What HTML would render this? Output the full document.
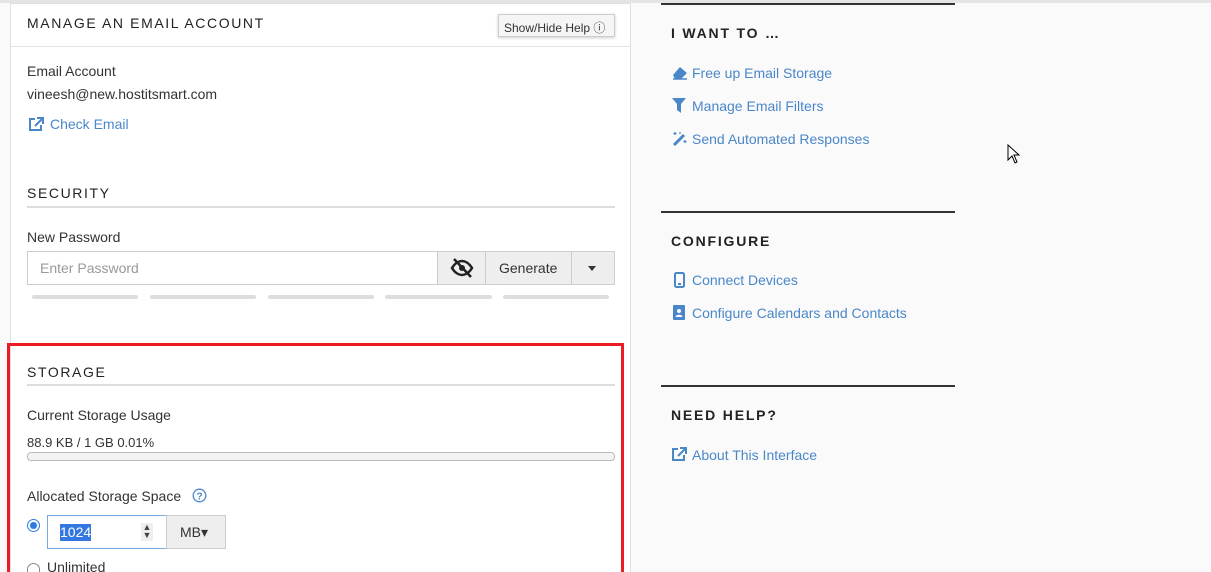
<!DOCTYPE html>
<html><head><style>
*{margin:0;padding:0;box-sizing:border-box}
html,body{width:1211px;height:572px;overflow:hidden}
body{background:#fafafa;font-family:"Liberation Sans",sans-serif;color:#333;position:relative;font-size:14px}
.a{position:absolute;white-space:nowrap}
.h{letter-spacing:1.4px;font-size:14px;color:#222;font-weight:bold}
.lk{color:#4a87c9;font-size:14px}
.lbl{font-size:14px;color:#333}
</style></head><body>
<div class="a" style="left:0;top:0;width:1211px;height:3px;background:#e4e4e4"></div>
<div class="a" style="left:10px;top:3px;width:621px;height:569px;background:#fff;border:1px solid #e0e0e0;border-bottom:none"></div>
<div class="a" style="left:11px;top:46px;width:619px;height:1px;background:#e3e3e3"></div>
<div class="a h" style="left:27px;top:15px;font-weight:normal;letter-spacing:1.6px">MANAGE AN EMAIL ACCOUNT</div>
<div class="a" style="left:498px;top:14px;width:117px;height:23px;border:1px solid #ccc;background:#f5f5f5;box-shadow:0 1px 3px rgba(0,0,0,.2);font-size:12px;color:#333;padding:4px 0 0 5px">Show/Hide Help ⓘ</div>
<div class="a lbl" style="left:27px;top:63px">Email Account</div>
<div class="a lbl" style="left:27px;top:86px">vineesh@new.hostitsmart.com</div>
<svg class="a" style="left:29px;top:117px" width="15" height="14" viewBox="0 0 15 14"><path d="M6 2H1v11h11V8" fill="none" stroke="#4a87c9" stroke-width="2"/><path d="M8 1h6v6M14 1L6 9" fill="none" stroke="#4a87c9" stroke-width="2"/></svg>
<div class="a lk" style="left:50px;top:116px">Check Email</div>
<div class="a h" style="left:27px;top:185px;font-weight:normal;letter-spacing:1.6px">SECURITY</div>
<div class="a" style="left:27px;top:206px;width:588px;height:2px;background:#ddd"></div>
<div class="a lbl" style="left:27px;top:229px">New Password</div>
<div class="a" style="left:27px;top:251px;width:588px;height:34px;border:1px solid #ccc;background:#fff"></div>
<div class="a" style="left:40px;top:260px;color:#999;font-size:14px">Enter Password</div>
<div class="a" style="left:437px;top:252px;width:177px;height:32px;background:#eee;border-left:1px solid #ccc"></div>
<div class="a" style="left:485px;top:252px;width:1px;height:32px;background:#ccc"></div>
<div class="a" style="left:571px;top:252px;width:1px;height:32px;background:#ccc"></div>
<svg class="a" style="left:450px;top:258px" width="24" height="20" viewBox="0 0 24 20"><path d="M2 10c3-5 7-7 10-7s7 2 10 7c-3 5-7 7-10 7S5 15 2 10z" fill="none" stroke="#222" stroke-width="2.5"/><circle cx="12" cy="10" r="3" fill="#222"/><path d="M4 1l17 18" stroke="#222" stroke-width="2.5"/></svg>
<div class="a" style="left:499px;top:260px;font-size:14px;color:#333">Generate</div>
<div class="a" style="left:588px;top:266px;border:4px solid transparent;border-top:5px solid #333;border-bottom:0"></div>
<div class="a" style="left:32px;top:295px;width:106px;height:4px;border-radius:2px;background:#ddd"></div>
<div class="a" style="left:150px;top:295px;width:106px;height:4px;border-radius:2px;background:#ddd"></div>
<div class="a" style="left:268px;top:295px;width:106px;height:4px;border-radius:2px;background:#ddd"></div>
<div class="a" style="left:385px;top:295px;width:107px;height:4px;border-radius:2px;background:#ddd"></div>
<div class="a" style="left:503px;top:295px;width:106px;height:4px;border-radius:2px;background:#ddd"></div>
<div class="a" style="left:7px;top:343px;width:617px;height:229px;border:3px solid #ec1c24;border-bottom:none"></div>
<div class="a h" style="left:27px;top:364px;font-weight:normal;letter-spacing:1.6px">STORAGE</div>
<div class="a" style="left:27px;top:384px;width:588px;height:2px;background:#ddd"></div>
<div class="a lbl" style="left:27px;top:407px">Current Storage Usage</div>
<div class="a" style="left:27px;top:435px;font-size:13px">88.9 KB / 1 GB 0.01%</div>
<div class="a" style="left:27px;top:452px;width:588px;height:9px;border:1px solid #bbb;border-radius:4px;background:#f3f3f3"></div>
<div class="a lbl" style="left:27px;top:488px">Allocated Storage Space</div>
<svg class="a" style="left:192px;top:488px" width="15" height="15" viewBox="0 0 15 15"><circle cx="7.5" cy="7.5" r="6.3" fill="none" stroke="#4a87c9" stroke-width="1.3"/><text x="7.5" y="11.3" font-size="10" text-anchor="middle" fill="#4a87c9" font-family="Liberation Sans" font-weight="bold">?</text></svg>
<div class="a" style="left:27px;top:519px;width:13px;height:13px;border-radius:50%;border:1px solid #2a7ae2;background:radial-gradient(circle,#2a7ae2 3px,#fff 4px)"></div>
<div class="a" style="left:47px;top:515px;width:120px;height:34px;border:1px solid #7aa9e6;background:#fff"></div>
<div class="a" style="left:60px;top:524px;background:#3377e0;color:#fff;font-size:14px;line-height:17px">1024</div>
<div class="a" style="left:141px;top:523px;width:12px;height:18px;background:#eee;font-size:9px;line-height:8px;text-align:center;color:#444">▲<br>▼</div>
<div class="a" style="left:166px;top:515px;width:60px;height:34px;border:1px solid #ccc;background:#eee;font-size:14px;padding:8px 0 0 13px">MB▾</div>
<div class="a" style="left:27px;top:563px;width:13px;height:9px;border-radius:7px 7px 0 0;border:1px solid #888;border-bottom:none;background:#fff"></div>
<div class="a lbl" style="left:47px;top:559px;height:13px;overflow:hidden">Unlimited</div>

<div class="a" style="left:661px;top:3px;width:294px;height:2px;background:#333"></div>
<div class="a h" style="left:671px;top:25px;letter-spacing:1.8px">I WANT TO …</div>
<svg class="a" style="left:672px;top:66px" width="16" height="14" viewBox="0 0 16 14"><path d="M1 9l7-8 7 6-6 6H3z" fill="#4a87c9"/><path d="M1 13h14" stroke="#4a87c9" stroke-width="1.5"/></svg>
<div class="a lk" style="left:692px;top:65px">Free up Email Storage</div>
<svg class="a" style="left:672px;top:98px" width="14" height="15" viewBox="0 0 14 15"><path d="M0 0h14L9 6v9L5 12V6z" fill="#4a87c9"/></svg>
<div class="a lk" style="left:692px;top:98px">Manage Email Filters</div>
<svg class="a" style="left:672px;top:131px" width="15" height="15" viewBox="0 0 15 15"><path d="M2 14L12 4" stroke="#4a87c9" stroke-width="3"/><path d="M3 1v3M1.5 2.5h3M13 9v3M11.5 10.5h3M8 1v2" stroke="#4a87c9" stroke-width="1.2"/></svg>
<div class="a lk" style="left:692px;top:131px">Send Automated Responses</div>
<div class="a" style="left:661px;top:211px;width:294px;height:2px;background:#333"></div>
<div class="a h" style="left:671px;top:233px;letter-spacing:1.8px">CONFIGURE</div>
<svg class="a" style="left:674px;top:272px" width="11" height="16" viewBox="0 0 11 16"><rect x="1" y="1" width="9" height="14" rx="1.5" fill="none" stroke="#4a87c9" stroke-width="2"/><rect x="4" y="11" width="3" height="2" fill="#4a87c9"/></svg>
<div class="a lk" style="left:692px;top:272px">Connect Devices</div>
<svg class="a" style="left:672px;top:305px" width="14" height="15" viewBox="0 0 14 15"><rect x="1" y="0" width="12" height="15" rx="1" fill="#4a87c9"/><circle cx="7" cy="6" r="2" fill="#fff"/><path d="M3.5 12c0-3 7-3 7 0z" fill="#fff"/></svg>
<div class="a lk" style="left:692px;top:305px">Configure Calendars and Contacts</div>
<div class="a" style="left:661px;top:385px;width:294px;height:2px;background:#333"></div>
<div class="a h" style="left:671px;top:407px;letter-spacing:1.8px">NEED HELP?</div>
<svg class="a" style="left:672px;top:447px" width="15" height="14" viewBox="0 0 15 14"><path d="M6 2H1v11h11V8" fill="none" stroke="#4a87c9" stroke-width="2"/><path d="M8 1h6v6M14 1L6 9" fill="none" stroke="#4a87c9" stroke-width="2"/></svg>
<div class="a lk" style="left:692px;top:447px">About This Interface</div>
<svg class="a" style="left:1007px;top:144px" width="13" height="20" viewBox="0 0 13 20"><path d="M1 1v15l4-4 3 7 2-1-3-7h5z" fill="#fff" stroke="#000" stroke-width="1"/></svg>
</body></html>
